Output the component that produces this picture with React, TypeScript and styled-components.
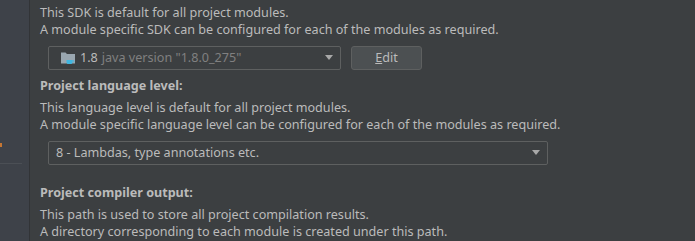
import { createGlobalStyle } from 'styled-components';
import styled from 'styled-components';

const GlobalStyle = createGlobalStyle`
	html, body {
		margin: 0;
		padding: 0;
		background: #3c3f41;
		overflow: hidden;
	}
	body {
		font-family: 'Noto Sans', 'Liberation Sans', sans-serif;
		font-size: 12.6px;
		color: #bbbbbb;
	}
`;

export default function App() {
	return (
		<Frame>
			<GlobalStyle />
			<Sidebar>
				<SelectionMark />
				<TreeLine />
			</Sidebar>

			<Main>
				<Section $gap={0}>
					<Title>Project SDK:</Title>
					<Desc>This SDK is default for all project modules.</Desc>
					<Desc>A module specific SDK can be configured for each of the modules as required.</Desc>
					<Row>
						<Combo $width={293} $padLeft={12}>
							<FolderIcon />
							<Version>1.8</Version>
							<Muted>java version "1.8.0_275"</Muted>
							<Arrow />
						</Combo>
						<Button>
							<u>E</u>dit
						</Button>
					</Row>
				</Section>

				<Section $gap={7}>
					<Title>Project language level:</Title>
					<Desc>This language level is default for all project modules.</Desc>
					<Desc>A module specific language level can be configured for each of the modules as required.</Desc>
					<Row>
						<Combo $width={500} $padLeft={7}>
							<span>8 - Lambdas, type annotations etc.</span>
							<Arrow />
						</Combo>
					</Row>
				</Section>

				<Section $gap={19}>
					<Title>Project compiler output:</Title>
					<Desc>This path is used to store all project compilation results.</Desc>
					<Desc>A directory corresponding to each module is created under this path.</Desc>
				</Section>
			</Main>
		</Frame>
	);
}

function FolderIcon() {
	return (
		<Icon width='14' height='14' viewBox='0 0 14 14'>
			<path d='M0 1.5h4.5l1.5 1.5h8v9.5H0z' fill='#9aa7b0' />
			<path d='M5.5 9h6v2.2c0 1.1-0.9 1.8-1.8 1.8H7.3c-1 0-1.8-0.7-1.8-1.8z' fill='#40b6e0' />
			<path d='M11.5 9.5h1c0.7 0 0.7 1.4 0 1.4h-1' fill='none' stroke='#40b6e0' strokeWidth='0.9' />
		</Icon>
	);
}

const Frame = styled.div`
	display: flex;
	width: 695px;
	height: 241px;
	overflow: hidden;
`;

const Sidebar = styled.div`
	width: 29px;
	flex-shrink: 0;
	background: #3e4249;
	border-right: 1px solid #323437;
	display: flex;
	flex-direction: column;
`;

const SelectionMark = styled.div`
	margin-top: 143px;
	width: 2px;
	height: 4px;
	background: #c57633;
`;

const TreeLine = styled.div`
	margin-top: 16px;
	width: 22px;
	height: 1px;
	background: #4b4f55;
`;

const Main = styled.div`
	flex: 1;
	padding-left: 10px;
	margin-top: -18.5px;
`;

const Section = styled.div<{ $gap: number }>`
	margin-top: ${(p) => p.$gap}px;
	display: flex;
	flex-direction: column;
`;

const Title = styled.div`
	font-weight: 700;
	line-height: 17px;
	margin-bottom: 5px;
`;

const Desc = styled.div`
	line-height: 17px;
	white-space: nowrap;
`;

const Row = styled.div`
	display: flex;
	align-items: center;
	gap: 10px;
	margin: 8px 0 0 8px;
`;

const Combo = styled.div<{ $width: number; $padLeft: number }>`
	box-sizing: border-box;
	width: ${(p) => p.$width}px;
	height: 24px;
	border: 1px solid #5e6060;
	border-radius: 2px;
	display: flex;
	align-items: center;
	gap: 4px;
	padding-left: ${(p) => p.$padLeft}px;
	white-space: nowrap;
`;

const Icon = styled.svg`
	flex-shrink: 0;
	margin-right: 1px;
`;

const Version = styled.span`
	color: #bbbbbb;
`;

const Muted = styled.span`
	color: #808080;
`;

const Arrow = styled.div`
	margin-left: auto;
	margin-right: 7px;
	width: 0;
	height: 0;
	border-left: 4px solid transparent;
	border-right: 4px solid transparent;
	border-top: 5px solid #a8a8a8;
`;

const Button = styled.button`
	box-sizing: border-box;
	width: 71px;
	height: 24px;
	background: #4c5052;
	border: 1px solid #5e6060;
	border-radius: 3px;
	color: #bbbbbb;
	font: inherit;
	padding: 0;
`;
